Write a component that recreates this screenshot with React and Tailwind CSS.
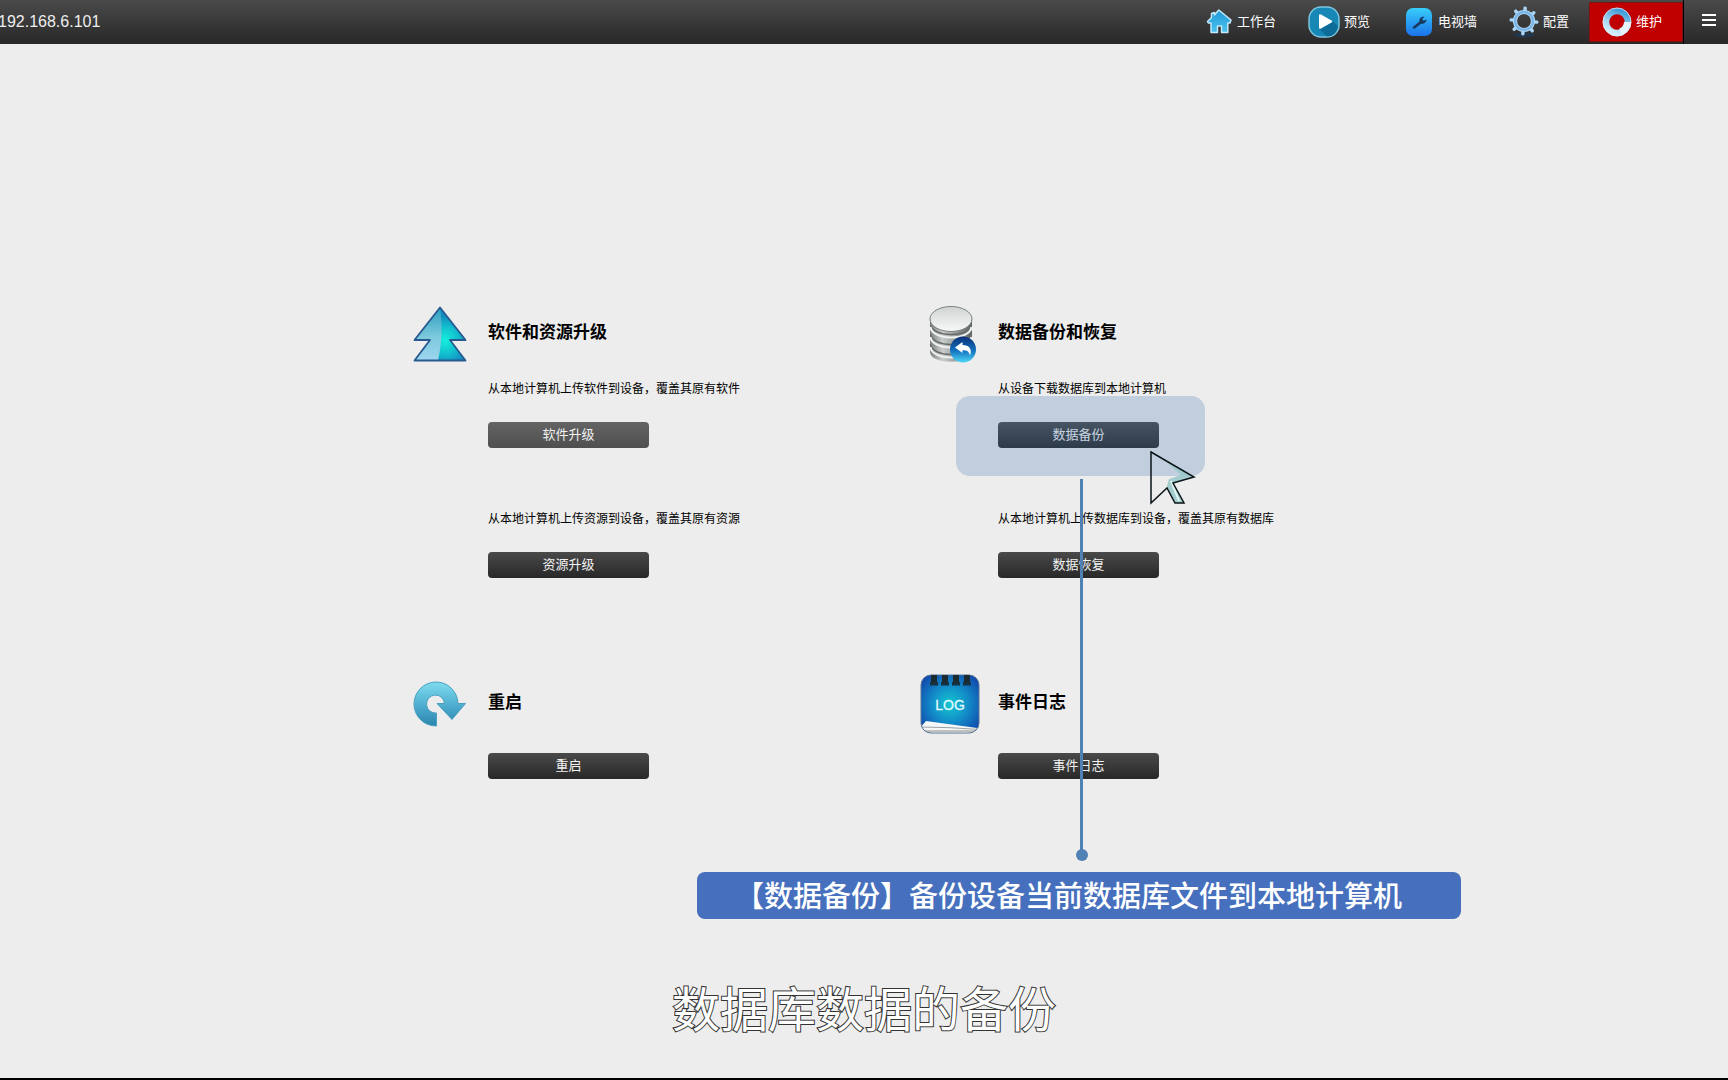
import React from "react";

function HomeIcon() {
  return (
    <svg viewBox="0 0 28 28" className="size-7">
      <defs>
        <linearGradient id="home" x1="0" y1="0" x2="0" y2="1">
          <stop offset="0" stopColor="#1f97d6" />
          <stop offset="1" stopColor="#4cc4ee" />
        </linearGradient>
      </defs>
      <path
        d="M2.500 13.500 L6.500 9.500 V5.500 L9.500 4.500 V7 L13.800 2 L26 12 L25 15 H22.800 V24.500 H16.500 V18 H12.500 V24.500 H6 V15 H3.500 Z"
        fill="url(#home)" stroke="#c4e8fb" strokeWidth="1.500" strokeLinejoin="round"
      />
    </svg>
  );
}

function PreviewIcon() {
  return (
    <svg viewBox="0 0 32 32" className="size-8">
      <rect x="1" y="1" width="30" height="30" rx="12" fill="#1788b5" stroke="#7cc5dd" strokeWidth="1.500" />
      <path d="M11 23 L25 15.500 L30 20 C29 27 25 30 19 30.500 Z" fill="#0e6d98" />
      <path d="M11 9.500 Q11 7.500 13 8.500 L23.500 14.500 Q25 15.500 23.500 16.500 L13 22.500 Q11 23.500 11 21.500 Z" fill="#fff" />
    </svg>
  );
}

function WallIcon() {
  return (
    <svg viewBox="0 0 26 28" className="h-7 w-[26px]">
      <defs>
        <linearGradient id="wall" x1="0" y1="0" x2="0" y2="1">
          <stop offset="0" stopColor="#38cdfb" />
          <stop offset="1" stopColor="#1b73ea" />
        </linearGradient>
      </defs>
      <rect x="0" y="0" width="26" height="28" rx="7" fill="url(#wall)" />
      <path
        d="M7 18.800 L13.500 13.500 C13 10.500 15 8 18.500 8.800 L16.200 11 L17.500 12.800 L20.500 11.500 C20.500 14.500 17.500 16.300 15 15.800 L9 20.500 C7.500 21.200 6.300 20 7 18.800 Z"
        fill="#173a5c"
      />
    </svg>
  );
}

function GearIcon() {
  const teeth = [5, 50, 95, 140, 185, 230, 275, 320];
  return (
    <svg viewBox="0 0 30 32" className="h-8 w-[30px]">
      <ellipse cx="15" cy="29" rx="11" ry="2.500" fill="#22384a" />
      {teeth.map((a) => (
        <rect key={a} x="13.300" y="0.500" width="3.400" height="6" rx="1.500" fill="#a9d4f5" transform={`rotate(${a} 15 15)`} />
      ))}
      <circle cx="15" cy="15" r="9" fill="none" stroke="#b4dbf8" strokeWidth="4.200" />
      <circle cx="15" cy="15" r="9" fill="none" stroke="#78b4e6" strokeWidth="2.400" />
    </svg>
  );
}

function MaintainIcon() {
  return (
    <svg viewBox="0 0 30 30" className="size-[30px]">
      <defs>
        <linearGradient id="ring" x1="0.300" y1="1" x2="0.700" y2="0">
          <stop offset="0" stopColor="#d3edf9" />
          <stop offset="0.450" stopColor="#9fd2ef" />
          <stop offset="1" stopColor="#3f9cd8" />
        </linearGradient>
      </defs>
      <circle cx="15" cy="15" r="11" fill="none" stroke="url(#ring)" strokeWidth="6.500" />
      <path d="M22 15 H29 A14 14 0 0 1 19 28.400 L17.500 21.500 A7.500 7.500 0 0 0 22 15 Z" fill="#e6f5fc" />
      <circle cx="15" cy="15" r="14" fill="none" stroke="#dceef8" strokeWidth="0.800" />
    </svg>
  );
}

function UpgradeIcon() {
  return (
    <svg viewBox="0 0 54 56" className="h-14 w-[54px]">
      <defs>
        <linearGradient id="upL" x1="0" y1="0" x2="0" y2="1">
          <stop offset="0" stopColor="#2c9fc0" />
          <stop offset="0.550" stopColor="#7cc9dc" />
          <stop offset="1" stopColor="#9ed6f0" />
        </linearGradient>
        <radialGradient id="upR" cx="0.600" cy="0.620" r="0.450">
          <stop offset="0" stopColor="#14f0dc" />
          <stop offset="0.600" stopColor="#12bccd" />
          <stop offset="1" stopColor="#128fc0" />
        </radialGradient>
      </defs>
      <path d="M27 1.500 L52.500 34 H37 L52.500 54.500 H1.500 L17 34 H1.500 Z" fill="url(#upR)" />
      <path d="M27 1.500 Q31 30 25 54.500 H1.500 L17 34 H1.500 Z" fill="url(#upL)" />
      <path d="M27 1.500 L52.500 34 H37 L52.500 54.500 H1.500 L17 34 H1.500 Z" fill="none" stroke="#27588f" strokeWidth="1.800" strokeLinejoin="round" />
    </svg>
  );
}

function DatabaseIcon() {
  return (
    <svg viewBox="0 0 50 58" className="ml-1.5 h-[58px] w-[50px]">
      <defs>
        <linearGradient id="dbSide" x1="0" y1="0" x2="1" y2="0">
          <stop offset="0" stopColor="#7d827f" />
          <stop offset="0.300" stopColor="#c9cdcb" />
          <stop offset="0.650" stopColor="#949996" />
          <stop offset="1" stopColor="#5e6360" />
        </linearGradient>
        <linearGradient id="dbTop" x1="0" y1="0" x2="0" y2="1">
          <stop offset="0" stopColor="#cfd3d1" />
          <stop offset="1" stopColor="#f7f9f8" />
        </linearGradient>
        <linearGradient id="dbBall" x1="0" y1="0" x2="0" y2="1">
          <stop offset="0" stopColor="#0b2f78" />
          <stop offset="0.550" stopColor="#1373c0" />
          <stop offset="1" stopColor="#4fd8f8" />
        </linearGradient>
      </defs>
      <path d="M2 14 V47 C2 60 44 60 44 47 V14 Z" fill="url(#dbSide)" />
      {[19, 29, 39].map((y) => (
        <g key={y}>
          <path d={`M2.500 ${y} C4 ${y + 14} 42 ${y + 14} 43.500 ${y}`} fill="none" stroke="#656b68" strokeWidth="1.500" />
          <path d={`M2.500 ${y + 3} C4 ${y + 17} 42 ${y + 17} 43.500 ${y + 3}`} fill="none" stroke="#eef1ef" strokeWidth="2.200" />
        </g>
      ))}
      <path d="M2 14 V17 C2 31 44 31 44 17 V14 Z" fill="url(#dbSide)" />
      <ellipse cx="23" cy="14" rx="21" ry="12.500" fill="url(#dbTop)" stroke="#7c817e" strokeWidth="1" />
      <circle cx="35" cy="44.500" r="13" fill="url(#dbBall)" />
      <path d="M27 42.500 L34.500 37 V40 C41 40 44.500 44 42 50.500 C41 46.500 39 45.300 34.500 45.300 V48 Z" fill="#fff" />
    </svg>
  );
}

function RestartIcon() {
  return (
    <svg viewBox="0 0 54 46" className="h-[46px] w-[54px]">
      <defs>
        <linearGradient id="re" x1="0" y1="0" x2="0" y2="1">
          <stop offset="0" stopColor="#7fdcef" />
          <stop offset="0.500" stopColor="#52b0d2" />
          <stop offset="1" stopColor="#2a84ae" />
        </linearGradient>
      </defs>
      <path
        d="M23.500 45 A22 22 0 1 1 45 22.500 H52.500 L39 38.500 L24 22.500 H31.500 A9 9 0 1 0 23.500 32 Z"
        fill="url(#re)" stroke="#4ba0bf" strokeWidth="1"
      />
    </svg>
  );
}

function LogIcon() {
  return (
    <svg viewBox="0 0 60 60" className="size-[60px]">
      <defs>
        <radialGradient id="log" cx="0.500" cy="0.500" r="0.650">
          <stop offset="0" stopColor="#16c6cf" />
          <stop offset="0.450" stopColor="#128fc9" />
          <stop offset="1" stopColor="#103fa8" />
        </radialGradient>
        <clipPath id="logClip">
          <rect x="1" y="1" width="58" height="58" rx="10" />
        </clipPath>
      </defs>
      <g clipPath="url(#logClip)">
        <rect width="60" height="60" fill="url(#log)" />
        <path d="M0 54 L6 47 L60 54.500 V60 H0 Z" fill="#f4f6f7" />
        <path d="M0 53 Q28 53 60 55.500" fill="none" stroke="#9aa0a4" strokeWidth="1" />
        <path d="M0 57 H60" stroke="#8d8a86" strokeWidth="1" />
      </g>
      <rect x="1" y="1" width="58" height="58" rx="10" fill="none" stroke="#5b7594" strokeWidth="1" />
      {[11, 22, 33, 44].map((x) => (
        <g key={x}>
          <rect x={x} y="1" width="6" height="7" fill="#1c2a30" />
          <rect x={x - 1} y="8" width="8" height="3.500" fill="#16313f" />
        </g>
      ))}
      <text x="30" y="35.500" textAnchor="middle" fill="#dffaff" stroke="#dffaff" strokeWidth="0.300" fontSize="14" fontFamily="Liberation Sans, sans-serif">LOG</text>
    </svg>
  );
}

function Pointer() {
  return (
    <svg viewBox="0 0 48 56" className="pointer-events-none absolute left-[151px] top-7 z-20 h-14 w-12">
      <path d="M14 9 L45 27 L24 33 L35 53 H26 L18 36 L20 29 L32 25 Z" fill="#9cc9cc" fillOpacity="0.900" />
      <path d="M22 31 L30 51" fill="none" stroke="#e4f4f3" strokeWidth="2" />
      <path d="M2 2 L45 27 L24 33 L35 53 H26 L18 38 L2 53 Z" fill="none" stroke="#0b1518" strokeWidth="1.500" />
    </svg>
  );
}

function Header() {
  return (
    <header className="flex h-11 items-center justify-between bg-linear-to-b from-[#4a4a4a] to-[#282828] text-white">
      <span className="-ml-0.5 font-['Liberation_Sans',sans-serif] text-base text-[#eeeeee]">192.168.6.101</span>
      <nav className="flex h-full items-center text-[13px]">
        <button className="mr-8 flex items-center gap-1"><HomeIcon />工作台</button>
        <button className="mr-9 flex items-center gap-1"><PreviewIcon />预览</button>
        <button className="mr-8 flex items-center gap-1.5"><WallIcon />电视墙</button>
        <button className="mr-5 flex items-center gap-1"><GearIcon />配置</button>
        <button aria-current="page" className="flex h-10 w-[94px] items-center gap-1 border border-[#7a1010] bg-[#c00000] pl-3">
          <MaintainIcon />维护
        </button>
        <button aria-label="菜单" className="flex h-full w-[45px] flex-col items-center justify-center gap-[3px] border-l border-black pb-1 pl-1.5">
          <span className="h-0.5 w-3.5 bg-white" />
          <span className="h-0.5 w-3.5 bg-white" />
          <span className="h-0.5 w-3.5 bg-white" />
        </button>
      </nav>
    </header>
  );
}

function ActionButton({ children, hovered }) {
  return (
    <button
      className={
        "block h-[26px] w-[161px] rounded text-[13px] leading-[26px] text-[#f2f2f2] bg-linear-to-b " +
        (hovered ? "from-[#646464] to-[#4f4f4f]" : "from-[#4a4a4a] to-[#282828]")
      }
    >
      {children}
    </button>
  );
}

function Section({ icon, title, children }) {
  return (
    <section className="flex">
      <div className="flex h-[62px] w-20 shrink-0 items-center justify-center">{icon}</div>
      <div className="ml-2">
        <h2 className="flex h-[60px] items-center text-[17px] font-bold">{title}</h2>
        {children}
      </div>
    </section>
  );
}

function Task({ text, children }) {
  return (
    <div className="mb-[61px]">
      <p className="mb-[23px] whitespace-nowrap text-xs leading-5">{text}</p>
      {children}
    </div>
  );
}

function BackupHint() {
  return (
    <>
      <div className="pointer-events-none absolute -left-[42px] -top-[26px] z-10 h-20 w-[249px] rounded-[14px] bg-[#3f72b4]/25" />
      <Pointer />
      <div className="pointer-events-none absolute left-1/2 top-[57px] z-10 flex w-[764px] -translate-x-1/2 flex-col items-center">
        <div className="ml-1.5 flex flex-col items-center">
          <div className="h-[372px] w-[3px] bg-[#5081b5]" />
          <div className="-mt-0.5 size-3 rounded-full bg-[#5081b5]" />
        </div>
        <p className="mt-[11px] h-[47px] w-full rounded-lg bg-[#4670bd] pr-5 text-center text-[29px] font-medium leading-[50px] text-white">
          【数据备份】备份设备当前数据库文件到本地计算机
        </p>
      </div>
    </>
  );
}

export default function App() {
  return (
    <div className="flex min-h-screen flex-col overflow-x-hidden border-b-2 border-black bg-[#ededed] font-['Liberation_Sans','Noto_Sans_CJK_SC',sans-serif] text-black">
      <Header />
      <main className="grid grid-cols-[400fr_510fr_818fr] gap-y-[34px] pt-[259px]">
        <div className="col-start-2">
          <Section icon={<UpgradeIcon />} title="软件和资源升级">
            <div className="pt-4">
              <Task text="从本地计算机上传软件到设备，覆盖其原有软件"><ActionButton hovered>软件升级</ActionButton></Task>
              <Task text="从本地计算机上传资源到设备，覆盖其原有资源"><ActionButton>资源升级</ActionButton></Task>
            </div>
          </Section>
        </div>
        <div>
          <Section icon={<DatabaseIcon />} title="数据备份和恢复">
            <div className="pt-4">
              <Task text="从设备下载数据库到本地计算机">
                <div className="relative w-[161px]">
                  <ActionButton>数据备份</ActionButton>
                  <BackupHint />
                </div>
              </Task>
              <Task text="从本地计算机上传数据库到设备，覆盖其原有数据库"><ActionButton>数据恢复</ActionButton></Task>
            </div>
          </Section>
        </div>
        <div className="col-start-2">
          <Section icon={<RestartIcon />} title="重启">
            <div className="pt-5"><ActionButton>重启</ActionButton></div>
          </Section>
        </div>
        <div>
          <Section icon={<LogIcon />} title="事件日志">
            <div className="pt-5"><ActionButton>事件日志</ActionButton></div>
          </Section>
        </div>
      </main>
      <p className="mt-auto mb-8 text-center text-5xl leading-[70px] text-white [-webkit-text-stroke:2px_#333] [paint-order:stroke_fill]">数据库数据的备份</p>
    </div>
  );
}
